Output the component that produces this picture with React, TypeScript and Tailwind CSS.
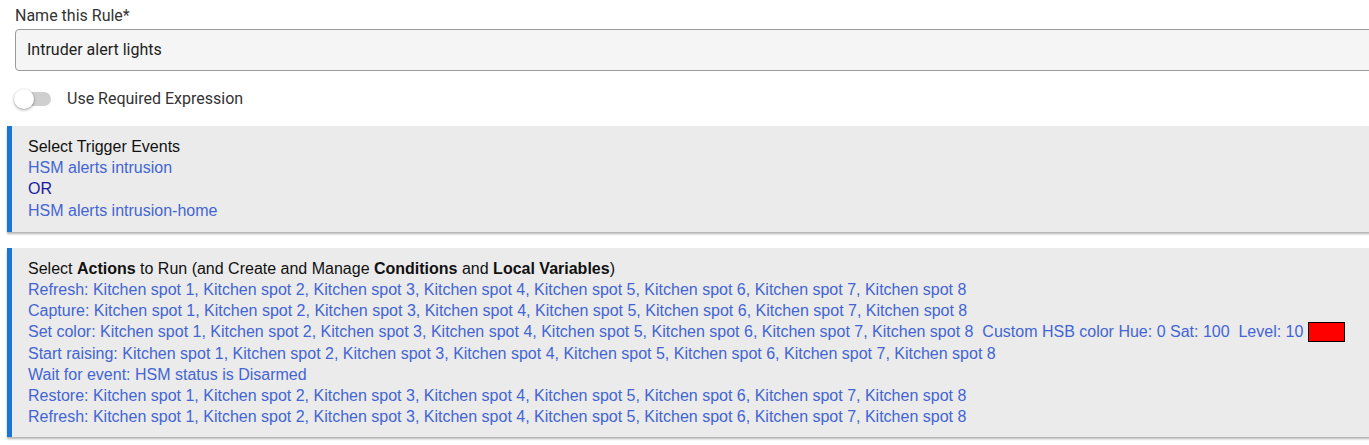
import React from "react";

const spots = "Kitchen spot 1, Kitchen spot 2, Kitchen spot 3, Kitchen spot 4, Kitchen spot 5, Kitchen spot 6, Kitchen spot 7, Kitchen spot 8";

function Link({ children }: { children: React.ReactNode }) {
  return <div className="text-[#4365d3]">{children}</div>;
}

export default function App() {
  return (
    <div className="w-[1369px] h-[445px] overflow-hidden bg-white">
      <div className="pl-[15px] pt-[7px] font-['Roboto',sans-serif]">
        <div className="text-[16px] leading-[18px] text-[#333]">Name this Rule*</div>
        <div className="mt-[4px] h-[42px] w-[1380px] rounded-[4px] border border-[#9a9a9a] bg-[#f5f5f5] pl-[11px] flex items-center text-[16px] text-[#222]">
          Intruder alert lights
        </div>
        <div className="mt-[16px] flex items-center h-[24px]">
          <div className="relative w-[36px] h-[14px]">
            <div className="absolute left-[2px] top-0 w-[34px] h-[14px] rounded-full bg-[#cfcfcf]" />
            <div className="absolute left-[-1px] top-[-3px] w-[20px] h-[20px] rounded-full bg-white shadow-[0_1px_3px_rgba(0,0,0,0.4)]" />
          </div>
          <span className="ml-[16px] text-[16px] text-[#333]">Use Required Expression</span>
        </div>
      </div>
      <div className="ml-[7px] mt-[15px] font-['Liberation_Sans',Arial,sans-serif] text-[16px] leading-[21.2px]">
        <div className="w-[1370px] bg-[#ebebeb] border-l-[5px] border-[#1976d2] shadow-[0_2px_2px_rgba(0,0,0,0.3)] pl-[16px] pt-[10px] pb-[11px]">
          <div className="text-[#111]">Select Trigger Events</div>
          <Link>HSM alerts intrusion</Link>
          <div className="text-[#1a1a9c]">OR</div>
          <Link>HSM alerts intrusion-home</Link>
        </div>
        <div className="mt-[16px] w-[1370px] bg-[#ebebeb] border-l-[5px] border-[#1976d2] shadow-[0_2px_2px_rgba(0,0,0,0.3)] pl-[16px] pt-[10px] pb-[10px]">
          <div className="text-[#111]">
            Select <b>Actions</b> to Run (and Create and Manage <b>Conditions</b> and <b>Local Variables</b>)
          </div>
          <Link>Refresh: {spots}</Link>
          <Link>Capture: {spots}</Link>
          <div className="text-[#4365d3] whitespace-pre">
            {"Set color: " + spots + "  Custom HSB color Hue: 0 Sat: 100  Level: 10 "}
            <span className="inline-block align-middle w-[37px] h-[20px] bg-[#ff0000] border border-black -mt-[2px]" />
          </div>
          <Link>Start raising: {spots}</Link>
          <Link>Wait for event: HSM status is Disarmed</Link>
          <Link>Restore: {spots}</Link>
          <Link>Refresh: {spots}</Link>
        </div>
      </div>
    </div>
  );
}
